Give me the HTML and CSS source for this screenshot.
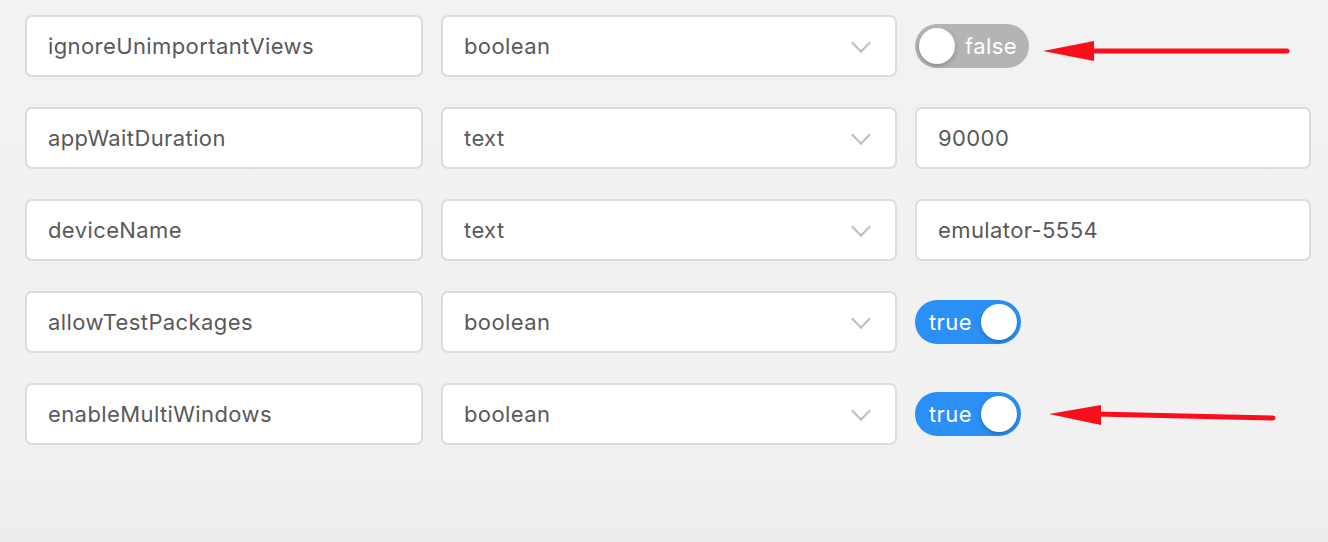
FILE: index.html
```html
<!DOCTYPE html>
<html>
<head>
<meta charset="utf-8">
<link rel="stylesheet" href="styles.css">
</head>
<body>
<div class="page">
  <div class="rows">
    <div class="row">
      <div class="field name">ignoreUnimportantViews</div>
      <div class="field select">boolean<span class="chev"></span></div>
      <div class="value"><div class="switch off"><span class="knob"></span><span class="label">false</span></div></div>
    </div>
    <div class="row">
      <div class="field name">appWaitDuration</div>
      <div class="field select">text<span class="chev"></span></div>
      <div class="field value-box">90000</div>
    </div>
    <div class="row">
      <div class="field name">deviceName</div>
      <div class="field select">text<span class="chev"></span></div>
      <div class="field value-box">emulator-5554</div>
    </div>
    <div class="row">
      <div class="field name">allowTestPackages</div>
      <div class="field select">boolean<span class="chev"></span></div>
      <div class="value"><div class="switch on"><span class="label">true</span><span class="knob"></span></div></div>
    </div>
    <div class="row">
      <div class="field name">enableMultiWindows</div>
      <div class="field select">boolean<span class="chev"></span></div>
      <div class="value"><div class="switch on"><span class="label">true</span><span class="knob"></span></div></div>
    </div>
  </div>
  <svg class="arrows" width="1328" height="542" viewBox="0 0 1328 542">
    <line x1="1086" y1="51" x2="1287" y2="51" stroke="#fc0d1b" stroke-width="5" stroke-linecap="round"/>
    <polygon points="1043,51 1094,41 1094,61" fill="#fc0d1b"/>
    <line x1="1096" y1="414" x2="1273" y2="418" stroke="#fc0d1b" stroke-width="5" stroke-linecap="round"/>
    <polygon points="1049,414 1101,405 1101,425" fill="#fc0d1b"/>
  </svg>
</div>
</body>
</html>
```
FILE: styles.css
```css
html, body {
  margin: 0;
  padding: 0;
}
body {
  width: 1328px;
  height: 542px;
  overflow: hidden;
  background: linear-gradient(to bottom, #f2f2f2 0px, #f1f1f1 440px, #ededed 542px);
  font-family: Inter, "Open Sans", "Liberation Sans", sans-serif;
}
.page {
  position: relative;
  width: 1328px;
  height: 542px;
}
.rows {
  display: flex;
  flex-direction: column;
  gap: 30px;
  padding: 15px 0 0 25px;
}
.row {
  display: flex;
  gap: 18px;
  height: 62px;
}
.field {
  box-sizing: border-box;
  height: 62px;
  background: #fff;
  border: 2px solid #dcdcdc;
  border-radius: 7px;
  display: flex;
  align-items: center;
  padding-left: 21px;
  font-size: 22px;
  letter-spacing: 0.4px;
  font-weight: 400;
  color: #595959;
  position: relative;
}
.name { width: 398px; }
.select { width: 456px; }
.value-box { width: 396px; }
.value {
  width: 396px;
  display: flex;
  align-items: center;
}
.chev {
  position: absolute;
  right: 27px;
  top: 19px;
  width: 12px;
  height: 12px;
  border-right: 2px solid #bdbdbd;
  border-bottom: 2px solid #bdbdbd;
  transform: rotate(45deg);
}
.switch {
  height: 44px;
  border-radius: 22px;
  display: flex;
  align-items: center;
  box-sizing: border-box;
  padding: 0 4px;
  color: #fff;
  font-size: 22px;
  letter-spacing: 0.4px;
}
.switch .knob {
  width: 36px;
  height: 36px;
  border-radius: 50%;
  background: #fff;
  box-shadow: 0 2px 4px rgba(0,0,0,0.25);
}
.switch.off {
  width: 114px;
  background: #b4b4b4;
}
.switch.off .label { margin-left: 10px; }
.switch.on {
  width: 106px;
  background: #2a90f6;
  padding-left: 14px;
  justify-content: space-between;
}
.arrows {
  position: absolute;
  left: 0;
  top: 0;
  pointer-events: none;
}
```
